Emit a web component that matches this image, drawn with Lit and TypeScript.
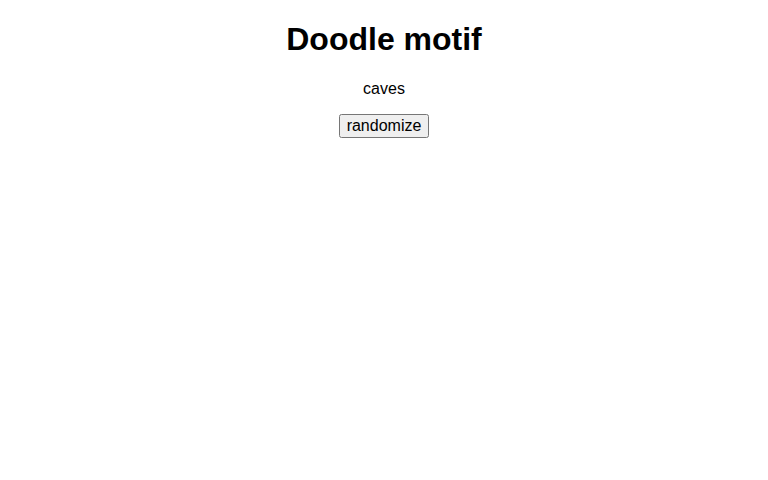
import { LitElement, html, css } from 'lit';
import { customElement, state } from 'lit/decorators.js';

const MOTIFS = ['caves', 'forest', 'clouds', 'waves', 'mushrooms', 'castles', 'planets', 'feathers'];

@customElement('app-root')
export class AppRoot extends LitElement {
    static styles = css`
        :host {
            display: flow-root;
            font-family: 'Liberation Sans', Arial, sans-serif;
            font-size: 16px;
            text-align: center;
            color: #000;
        }

        .title {
            margin: 20px 0 22px;
            font-size: 32px;
            line-height: 38px;
            font-weight: bold;
        }

        .motif {
            margin: 16px 0;
            line-height: 18px;
        }

        .randomize {
            font: inherit;
        }
    `;

    @state() private motif = MOTIFS[0];

    private randomize() {
        // never land on the same motif twice in a row
        const others = MOTIFS.filter((m) => m !== this.motif);
        this.motif = others[Math.floor(Math.random() * others.length)];
    }

    render() {
        return html`
            <h1 class="title">Doodle motif</h1>
            <p class="motif" aria-live="polite">${this.motif}</p>
            <button class="randomize" type="button" @click=${this.randomize}>randomize</button>
        `;
    }
}
